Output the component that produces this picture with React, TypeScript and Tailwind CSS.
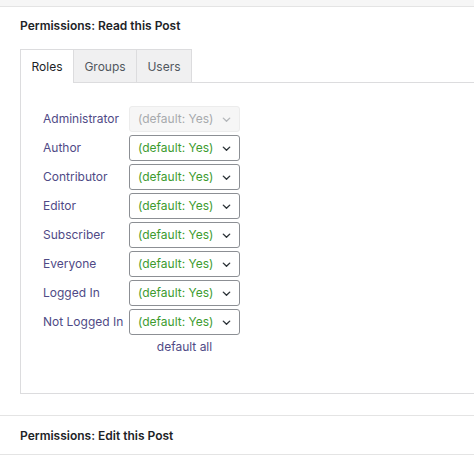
import React from "react";

const roles = [
  "Administrator",
  "Author",
  "Contributor",
  "Editor",
  "Subscriber",
  "Everyone",
  "Logged In",
  "Not Logged In",
];

function Chevron({ color }: { color: string }) {
  return (
    <svg width="11" height="11" viewBox="0 0 12 12" fill="none">
      <path d="M2.5 4.5 L6 8 L9.5 4.5" stroke={color} strokeWidth="1.5" strokeLinecap="round" strokeLinejoin="round" />
    </svg>
  );
}

export default function App() {
  return (
    <div className="w-[474px] h-[460px] bg-white overflow-hidden text-[12px]" style={{ fontFamily: "Inter, 'Noto Sans', sans-serif" }}>
      <div className="h-[7px] bg-[#f6f6f6] border-b border-[#e4e4e4]" />
      <div className="pl-5 pt-[11px]">
        <div className="font-semibold text-[#1d2327] text-[12px] leading-[16px]">Permissions: Read this Post</div>
        <div className="mt-[15px] flex h-[34px]">
          <div className="w-[54px] border border-b-0 border-[#dcdcde] bg-white flex items-center justify-center text-[#1d2327] pt-[1px]">Roles</div>
          <div className="w-[63px] border border-l-0 border-[#dcdcde] bg-[#f0f0f1] flex items-center justify-center text-[#50575e] pt-[1px]">Groups</div>
          <div className="w-[55px] border border-l-0 border-[#dcdcde] bg-[#f0f0f1] flex items-center justify-center text-[#50575e] pt-[1px]">Users</div>
          <div className="flex-1 border-b border-[#dcdcde]" />
        </div>
        <div className="h-[311px] border-l border-b border-[#dcdcde] pl-[22px] pt-[23px]">
          <div className="flex flex-col gap-[3px]">
            {roles.map((r, i) => {
              const disabled = i === 0;
              return (
                <div key={r} className="flex items-center h-[26px]">
                  <div className="w-[86px] text-[#4f4a86] whitespace-nowrap">{r}</div>
                  <div
                    className={
                      disabled
                        ? "w-[111px] h-[26px] rounded-[3px] border border-[#ececec] bg-[#f6f6f6] flex items-center justify-between pl-[8px] pr-[7px] text-[#a7aaad]"
                        : "w-[111px] h-[26px] rounded-[3px] border border-[#8c8f94] bg-white flex items-center justify-between pl-[8px] pr-[7px] text-[#3d9b2f]"
                    }
                  >
                    <span>(default: Yes)</span>
                    <Chevron color={disabled ? "#b5b8bb" : "#2c3338"} />
                  </div>
                </div>
              );
            })}
          </div>
          <div className="ml-[86px] w-[111px] text-center text-[#4f4a86] mt-[1px] leading-[22px]">default all</div>
        </div>
      </div>
      <div className="h-[21px]" />
      <div className="border-t border-b border-[#e4e4e4] h-[40px] pl-5 pt-[2px] flex items-center">
        <div className="font-semibold text-[#1d2327] text-[12px]">Permissions: Edit this Post</div>
      </div>
    </div>
  );
}
